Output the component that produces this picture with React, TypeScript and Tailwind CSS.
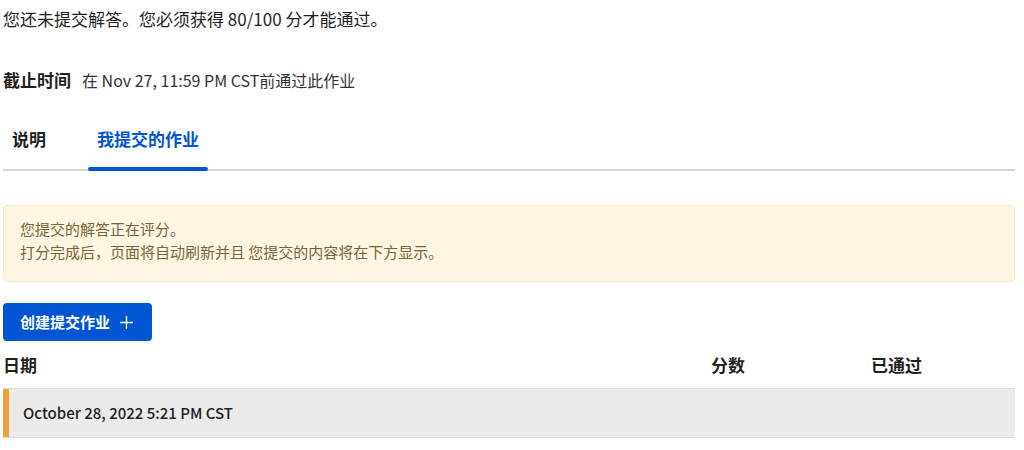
import React from "react";

export default function App() {
  return (
    <div
      className="w-[1024px] h-[450px] bg-white text-[#1f1f1f] overflow-hidden"
      style={{ fontFamily: '"Noto Sans CJK SC", "Noto Sans", sans-serif' }}
    >
      <div className="pl-[3px] pr-[9px]">
        <p className="text-[17px] leading-[24px] pt-[7px]">
          您还未提交解答。您必须获得 80/100 分才能通过。
        </p>
        <div className="mt-[37px] flex items-baseline">
          <span className="text-[17px] leading-[24px] font-bold">截止时间</span>
          <span className="ml-[11px] text-[16px] leading-[24px] text-[#333]">
            在 Nov 27, 11:59 PM CST前通过此作业
          </span>
        </div>
        <div className="mt-[33px] flex border-b-2 border-[#d5d5d5]">
          <div className="px-[9px] pt-[2px] pb-[18px] text-[17px] leading-[24px] font-bold w-[85px]">
            说明
          </div>
          <div className="relative px-[9px] pt-[2px] pb-[18px] text-[17px] leading-[24px] font-bold text-[#0056d2]">
            我提交的作业
            <div className="absolute left-0 right-0 bottom-[-2px] h-[4px] rounded-[2px] bg-[#0056d2]" />
          </div>
        </div>
        <div className="mt-[34px] h-[77px] rounded-[4px] border border-[#f7ebc4] bg-[#fdf6e3] px-[16px] pt-[11px] text-[15px] leading-[23px] text-[#7b6434]">
          <div>您提交的解答正在评分。</div>
          <div>打分完成后，页面将自动刷新并且 您提交的内容将在下方显示。</div>
        </div>
        <button className="mt-[21px] h-[38px] w-[149px] rounded-[4px] bg-[#0056d2] text-white flex items-center pl-[17px]">
          <span className="text-[15px] font-bold leading-[20px]">创建提交作业</span>
          <svg className="ml-[9px]" width="15" height="15" viewBox="0 0 15 15">
            <path d="M7.5 1v13M1 7.5h13" stroke="white" strokeWidth="1.4" />
          </svg>
        </button>
        <div className="mt-[12px] flex text-[17px] leading-[24px] font-bold">
          <div className="w-[708px]">日期</div>
          <div className="w-[160px]">分数</div>
          <div>已通过</div>
        </div>
        <div className="mt-[11px] h-[50px] flex bg-[#ebebeb] border-y border-[#dcdcdc]">
          <div className="w-[6px] bg-[#f0a23a]" />
          <div className="pl-[14px] flex items-center text-[15px] font-medium text-[#1f1f1f]">
            October 28, 2022 5:21 PM CST
          </div>
        </div>
      </div>
    </div>
  );
}
